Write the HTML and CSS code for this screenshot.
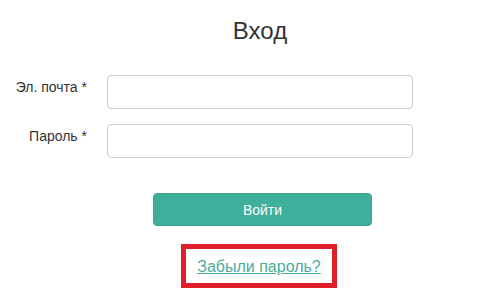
FILE: index.html
```
<!DOCTYPE html>
<html lang="ru">
<head>
<meta charset="utf-8">
<link rel="stylesheet" href="styles.css">
</head>
<body>
<div class="page">
  <h1 class="title">Вход</h1>
  <form class="form">
    <label class="label">Эл. почта *</label>
    <input class="input" type="text">
    <label class="label">Пароль *</label>
    <input class="input" type="password">
  </form>
  <div class="actions">
    <button class="btn" type="button">Войти</button>
  </div>
  <div class="forgot-wrap">
    <div class="forgot"><a href="#" class="link">Забыли пароль?</a></div>
  </div>
</div>
</body>
</html>
```
FILE: styles.css
```
html, body {
  margin: 0;
  padding: 0;
  background: #fff;
}
body {
  font-family: "Liberation Sans", Arial, sans-serif;
  color: #333;
}
.page {
  width: 490px;
  padding-top: 17px;
}
.title {
  margin: 0 0 30px 30px;
  width: 460px;
  text-align: center;
  font-size: 24px;
  line-height: 28px;
  font-weight: normal;
  color: #333;
}
.form {
  margin: 0;
  display: grid;
  grid-template-columns: 87px 306px;
  column-gap: 20px;
  row-gap: 15px;
}
.label {
  text-align: right;
  font-size: 14px;
  line-height: 20px;
  padding-top: 2px;
  color: #333;
}
.input {
  box-sizing: border-box;
  height: 34px;
  width: 306px;
  margin: 0;
  border: 1px solid #ccc;
  border-radius: 4px;
  background: #fff;
  outline: none;
}
.actions {
  margin-top: 35px;
  padding-left: 153px;
}
.btn {
  display: block;
  box-sizing: border-box;
  width: 219px;
  height: 33px;
  border: 1px solid #39a590;
  border-radius: 4px;
  background: #3eaf9a;
  color: #fff;
  font-family: "Liberation Sans", Arial, sans-serif;
  font-size: 14px;
  padding: 0;
  margin: 0;
}
.forgot-wrap {
  margin-top: 18px;
  padding-left: 181px;
}
.forgot {
  box-sizing: border-box;
  width: 156px;
  height: 44px;
  border: 5px solid #e11f2b;
  display: flex;
  align-items: center;
  justify-content: center;
}
.link {
  font-size: 16px;
  line-height: 18px;
  color: #4aab9c;
  text-decoration: underline;
  padding-top: 2px;
}
```
